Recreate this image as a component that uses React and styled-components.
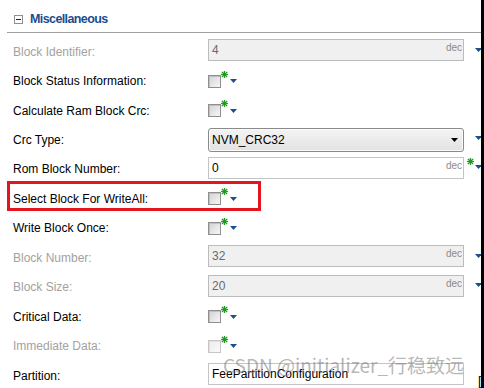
import React from 'react';
import styled, { createGlobalStyle } from 'styled-components';

const GlobalStyle = createGlobalStyle`
  html, body { margin: 0; padding: 0; background: #fff; }
  body { font-family: "Liberation Sans", Arial, sans-serif; font-size: 12px; }
`;

const Page = styled.div`
  position: relative;
  width: 484px;
  height: 388px;
  overflow: hidden;
  box-sizing: border-box;
  border-right: 3px solid #000;
  background: #fff;
`;

const Header = styled.div`
  display: flex;
  align-items: center;
  gap: 7px;
  height: 33px;
  box-sizing: border-box;
  padding: 6px 0 0 7px;
  margin-left: 7px;
  border-bottom: 1px solid #a0a0a0;
`;

const Title = styled.span`
  font-weight: bold;
  font-size: 12.5px;
  letter-spacing: -0.6px;
  color: #1d4c8c;
`;

const Collapse = styled.svg`
  width: 9px;
  height: 9px;
  margin-top: 1px;
  flex: none;
`;

const List = styled.div`
  padding-top: 4px;
`;

const Row = styled.div`
  position: relative;
  display: grid;
  grid-template-columns: 208px 256px 1fr;
  align-items: center;
  height: 29.45px;
`;

const Label = styled.span`
  padding-left: 13px;
  white-space: nowrap;
  color: ${(p) => (p.$disabled ? '#a2a2a2' : '#000')};
`;

const Field = styled.div`
  box-sizing: border-box;
  height: 22px;
  margin-bottom: 3px;
  display: flex;
  justify-content: space-between;
  align-items: center;
  padding: 0 1px 0 3px;
  border: 1px solid ${(p) => (p.$disabled ? '#bcbcbc' : '#c4c4c4')};
  background: ${(p) => (p.$disabled ? '#f0f0f0' : '#fff')};
  color: ${(p) => (p.$disabled ? '#6a6a6a' : '#000')};
  white-space: nowrap;
  overflow: hidden;
`;

const Unit = styled.span`
  align-self: flex-start;
  margin-top: 2px;
  font-size: 10px;
  line-height: 11px;
  color: #8a8a8a;
`;

const Combo = styled.div`
  box-sizing: border-box;
  height: 24px;
  margin-bottom: 1px;
  display: flex;
  align-items: center;
  justify-content: space-between;
  padding: 0 5px 0 3px;
  border: 1px solid #8a8a8a;
  border-radius: 3px;
  background: linear-gradient(#f4f4f4, #e2e2e2);
  box-shadow: inset 0 0 0 1px #fbfbfb;
  color: #000;
`;

const Marks = styled.div`
  display: grid;
  grid-template-columns: 8px 7px;
  align-items: center;
  padding-left: 3px;
`;

const CheckGroup = styled.div`
  display: flex;
  align-items: center;
`;

const Box = styled.span`
  box-sizing: border-box;
  width: 13px;
  height: 13px;
  border: 1px solid ${(p) => (p.$disabled ? '#c6c6c6' : '#8e8e8e')};
  background: ${(p) =>
    p.$disabled
      ? 'linear-gradient(135deg, #ececec, #fafafa)'
      : 'linear-gradient(135deg, #d2d2d2, #f7f7f7)'};
  box-shadow: inset 1px 1px 0 ${(p) => (p.$disabled ? '#e0e0e0' : '#c0c0c0')};
`;

const StarIcon = styled.svg`
  width: 7px;
  height: 7px;
  flex: none;
  margin-bottom: ${(p) => p.$lift}px;
`;

const ArrowIcon = styled.svg`
  width: 7px;
  height: 4px;
  flex: none;
  margin-left: ${(p) => p.$gap || 0}px;
  margin-bottom: ${(p) => p.$lift || 0}px;
`;

const Bracket = styled.span`
  margin-left: 3px;
  margin-top: 10px;
  font-size: 13px;
  color: #000;
`;

const Highlight = styled.div`
  position: absolute;
  top: -3px;
  left: 7px;
  width: 254px;
  height: 30px;
  box-sizing: border-box;
  border: 3px solid #e3161f;
  pointer-events: none;
`;

const Watermark = styled.div`
  position: absolute;
  left: 223px;
  top: 353px;
  font-family: "Noto Sans CJK SC", "Noto Sans", sans-serif;
  font-size: 19px;
  line-height: 24px;
  color: rgba(120, 120, 120, 0.55);
  white-space: nowrap;
  pointer-events: none;
`;

const Star = ({ lift = 0 }) => (
  <StarIcon viewBox="0 0 7 7" $lift={lift}>
    <g stroke="#1e9a1e" strokeWidth="1.3" strokeLinecap="square">
      <line x1="3.5" y1="0.5" x2="3.5" y2="6.5" />
      <line x1="0.5" y1="3.5" x2="6.5" y2="3.5" />
      <line x1="1.3" y1="1.3" x2="5.7" y2="5.7" />
      <line x1="5.7" y1="1.3" x2="1.3" y2="5.7" />
    </g>
  </StarIcon>
);

const Arrow = ({ color = '#1d4f8c', gap, lift }) => (
  <ArrowIcon viewBox="0 0 7 4" $gap={gap} $lift={lift}>
    <polygon points="0,0 7,0 3.5,4" fill={color} />
  </ArrowIcon>
);

const CheckCell = ({ disabled }) => (
  <CheckGroup>
    <Box $disabled={disabled} />
    <Star lift={14} />
    <Arrow gap={2} />
  </CheckGroup>
);

const InputMarks = ({ star, bracket }) => (
  <Marks>
    {star ? <Star lift={16} /> : <span />}
    {bracket ? <Bracket>[</Bracket> : <Arrow lift={4} />}
  </Marks>
);

const rows = [
  { label: 'Block Identifier:', disabled: true, kind: 'field', value: '4', unit: 'dec' },
  { label: 'Block Status Information:', kind: 'check' },
  { label: 'Calculate Ram Block Crc:', kind: 'check' },
  { label: 'Crc Type:', kind: 'combo', value: 'NVM_CRC32' },
  { label: 'Rom Block Number:', kind: 'field', value: '0', unit: 'dec', star: true },
  { label: 'Select Block For WriteAll:', kind: 'check', highlight: true },
  { label: 'Write Block Once:', kind: 'check' },
  { label: 'Block Number:', disabled: true, kind: 'field', value: '32', unit: 'dec' },
  { label: 'Block Size:', disabled: true, kind: 'field', value: '20', unit: 'dec' },
  { label: 'Critical Data:', kind: 'check' },
  { label: 'Immediate Data:', disabled: true, kind: 'check' },
  { label: 'Partition:', kind: 'field', value: 'FeePartitionConfiguration', bracket: true },
];

export default function App() {
  return (
    <>
      <GlobalStyle />
      <Page>
        <Header>
          <Collapse viewBox="0 0 9 9">
            <rect x="0.5" y="0.5" width="8" height="8" fill="#fff" stroke="#8f8f8f" />
            <line x1="2" y1="4.5" x2="7" y2="4.5" stroke="#222" strokeWidth="1" />
          </Collapse>
          <Title>Miscellaneous</Title>
        </Header>
        <List>
          {rows.map((r) => (
            <Row key={r.label}>
              <Label $disabled={r.disabled}>{r.label}</Label>
              {r.kind === 'check' && (
                <>
                  <CheckCell disabled={r.disabled} />
                  <span />
                </>
              )}
              {r.kind === 'field' && (
                <>
                  <Field $disabled={r.disabled}>
                    <span>{r.value}</span>
                    {r.unit && <Unit>{r.unit}</Unit>}
                  </Field>
                  <InputMarks star={r.star} bracket={r.bracket} />
                </>
              )}
              {r.kind === 'combo' && (
                <>
                  <Combo>
                    <span>{r.value}</span>
                    <Arrow color="#000" />
                  </Combo>
                  <InputMarks />
                </>
              )}
              {r.highlight && <Highlight />}
            </Row>
          ))}
        </List>
        <Watermark>CSDN @initializer_行稳致远</Watermark>
      </Page>
    </>
  );
}
